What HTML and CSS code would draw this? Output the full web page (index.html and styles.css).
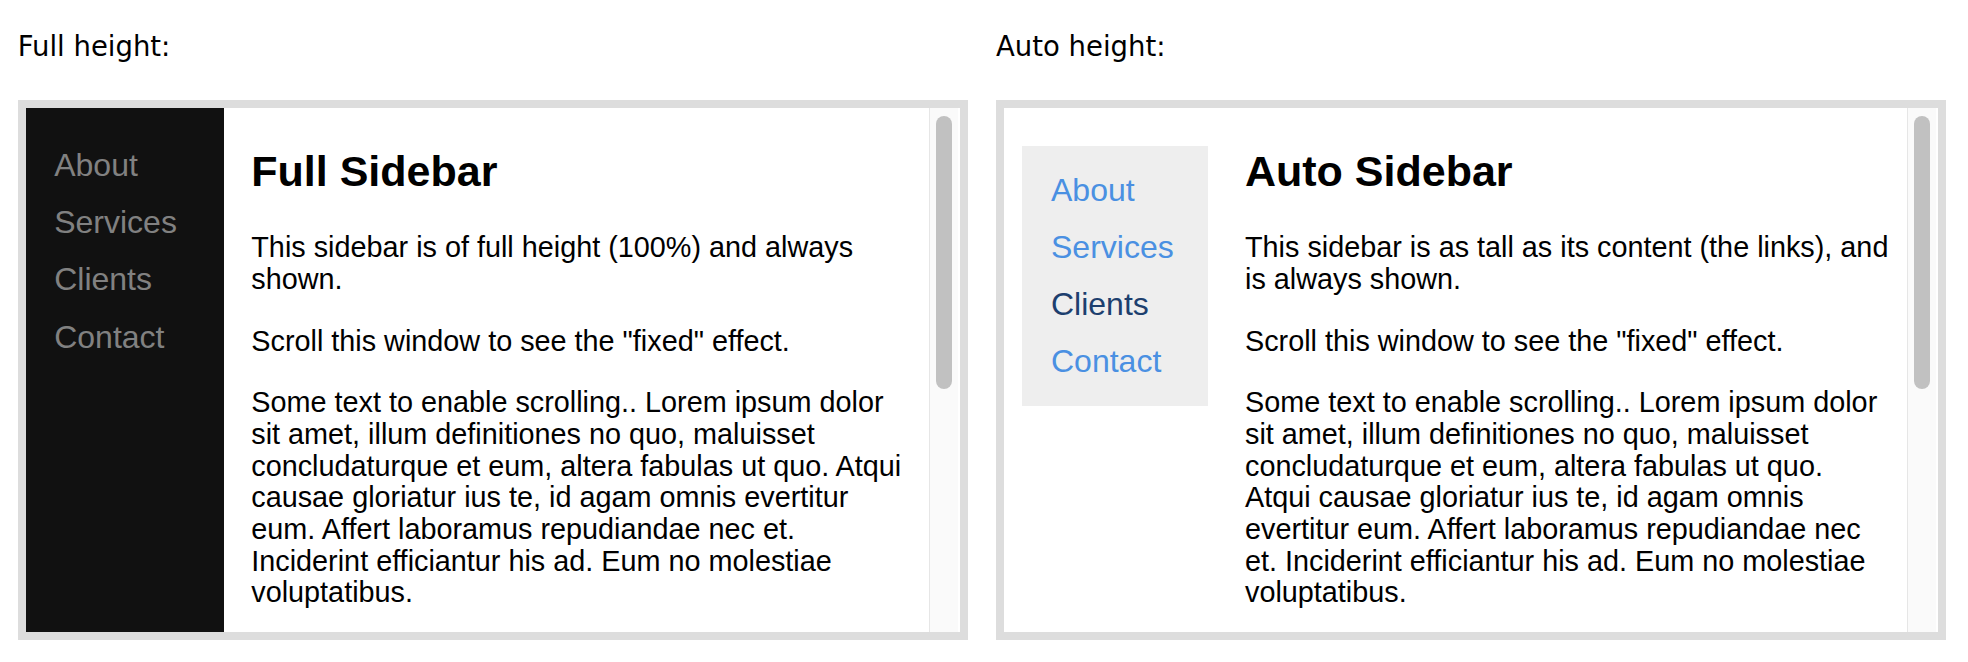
FILE: index.html
```html
<!DOCTYPE html>
<html lang="en">
<head>
<meta charset="utf-8">
<title>Fixed sidebar</title>
<link rel="stylesheet" href="styles.css">
</head>
<body>
<div class="demos">
  <section class="demo">
    <p class="label">Full height:</p>
    <div class="frame">
      <nav class="sidebar sidebar-full">
        <a href="#about">About</a>
        <a href="#services">Services</a>
        <a href="#clients">Clients</a>
        <a href="#contact">Contact</a>
      </nav>
      <main class="content content-full">
        <h2>Full Sidebar</h2>
        <p>This sidebar is of full height (100%) and always shown.</p>
        <p>Scroll this window to see the "fixed" effect.</p>
        <p>Some text to enable scrolling.. Lorem ipsum dolor sit amet, illum definitiones no quo, maluisset concludaturque et eum, altera fabulas ut quo. Atqui causae gloriatur ius te, id agam omnis evertitur eum. Affert laboramus repudiandae nec et. Inciderint efficiantur his ad. Eum no molestiae voluptatibus.</p>
      </main>
      <div class="scrollbar"><div class="thumb"></div></div>
    </div>
  </section>
  <section class="demo">
    <p class="label">Auto height:</p>
    <div class="frame">
      <nav class="sidebar sidebar-auto">
        <a href="#about">About</a>
        <a href="#services">Services</a>
        <a href="#clients" class="visited">Clients</a>
        <a href="#contact">Contact</a>
      </nav>
      <main class="content content-auto">
        <h2>Auto Sidebar</h2>
        <p>This sidebar is as tall as its content (the links), and is always shown.</p>
        <p>Scroll this window to see the "fixed" effect.</p>
        <p>Some text to enable scrolling.. Lorem ipsum dolor sit amet, illum definitiones no quo, maluisset concludaturque et eum, altera fabulas ut quo. Atqui causae gloriatur ius te, id agam omnis evertitur eum. Affert laboramus repudiandae nec et. Inciderint efficiantur his ad. Eum no molestiae voluptatibus.</p>
      </main>
      <div class="scrollbar"><div class="thumb"></div></div>
    </div>
  </section>
</div>
</body>
</html>
```

FILE: styles.css
```css
html, body {
  margin: 0;
  padding: 0;
  background: #ffffff;
}

.demos {
  display: flex;
  gap: 28.3px;
  padding-left: 17.7px;
}

.demo {
  width: 950px;
}

.label {
  font-family: "DejaVu Sans", Verdana, sans-serif;
  font-size: 27.5px;
  line-height: 31px;
  color: #000;
  margin: 31px 0 38px 0;
}

.frame {
  box-sizing: border-box;
  width: 950px;
  height: 540px;
  border: 8px solid #dddddd;
  background: #ffffff;
  display: flex;
  overflow: hidden;
  font-family: "Liberation Sans", Arial, Helvetica, sans-serif;
}

.sidebar a {
  display: block;
  font-size: 32px;
  line-height: 57.3px;
  text-decoration: none;
}

.sidebar-full {
  flex: 0 0 198.3px;
  background: #111111;
  padding-top: 28.8px;
  box-sizing: border-box;
}

.sidebar-full a {
  color: #818181;
  padding-left: 28.5px;
}

.sidebar-auto {
  flex: 0 0 186px;
  align-self: flex-start;
  box-sizing: border-box;
  height: 260px;
  margin: 37.7px 0 0 18px;
  padding-top: 16px;
  background: #eeeeee;
}

.sidebar-auto a {
  color: #4a90e2;
  padding-left: 29px;
  line-height: 57px;
}

.sidebar-auto a.visited {
  color: #1d3f6e;
}

.content {
  flex: 1 1 auto;
  min-width: 0;
  color: #000;
}

.content-full {
  padding: 0 18.7px 0 27.3px;
}

.content-auto {
  padding: 0 14.7px 0 37px;
}

.content h2 {
  font-size: 43px;
  font-weight: bold;
  line-height: 49px;
  margin: 38.6px 0 36.8px 0;
}

.content p {
  font-size: 28.8px;
  line-height: 31.7px;
  margin: 29.8px 0;
}

.scrollbar {
  flex: 0 0 31px;
  box-sizing: border-box;
  background: #fafafa;
  border-left: 1px solid #e6e6e6;
  border-right: 2px solid #ffffff;
  padding-top: 8px;
}

.thumb {
  width: 16px;
  height: 273px;
  margin-left: 6.3px;
  border-radius: 8px;
  background: #c1c1c1;
}
```
